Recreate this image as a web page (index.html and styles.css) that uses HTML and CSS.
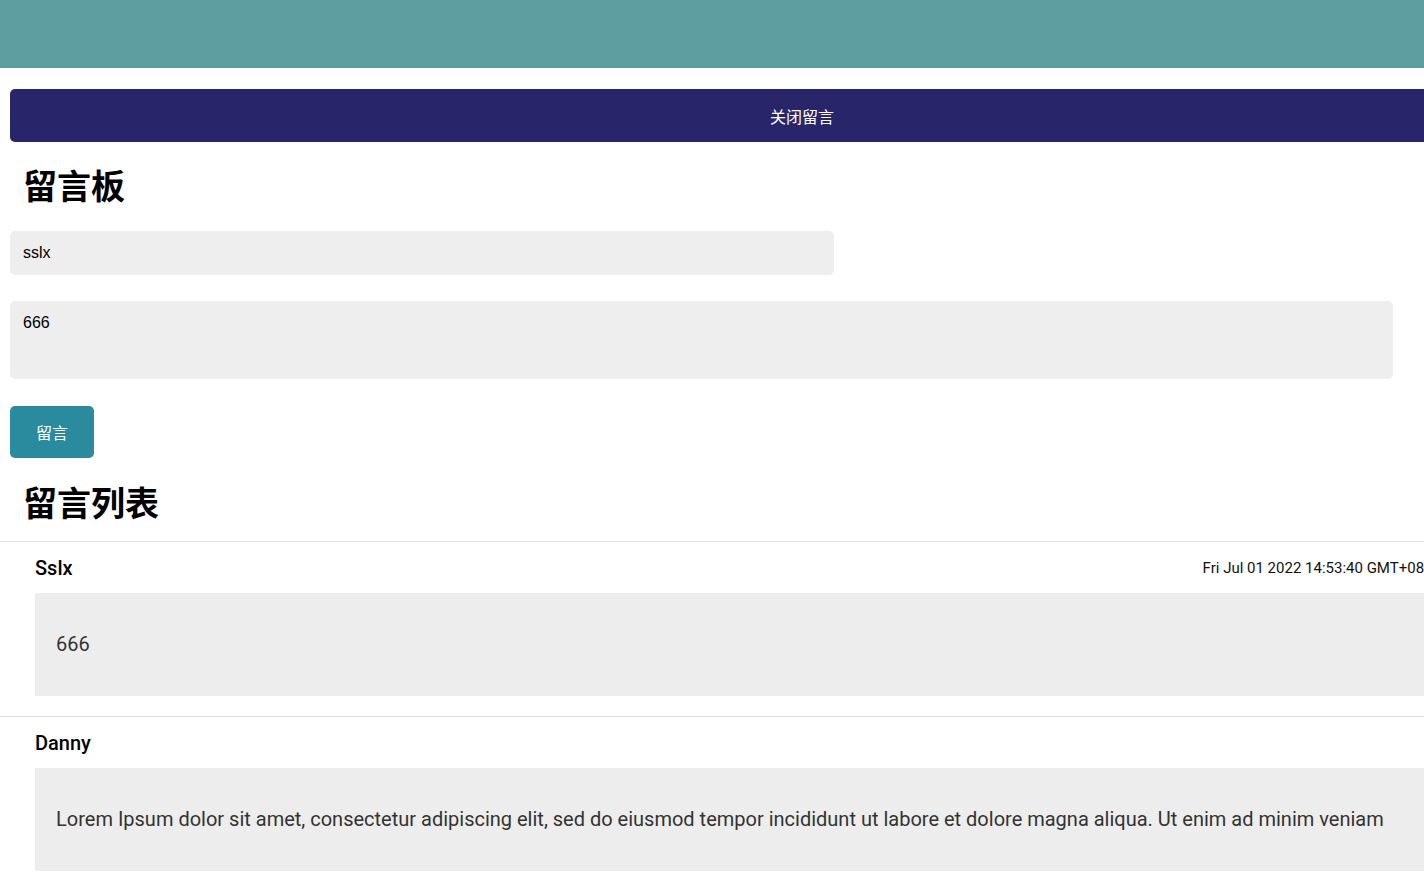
FILE: index.html
```html
<!DOCTYPE html>
<html lang="zh-CN">
<head>
<meta charset="utf-8">
<title>留言板</title>
<link rel="stylesheet" href="styles.css">
</head>
<body>
<div class="page">
  <header class="topbar"></header>
  <main class="main">
    <button class="btn-close">关闭留言</button>
    <h1 class="title">留言板</h1>
    <form class="form">
      <input class="field-name" type="text" value="sslx">
      <textarea class="field-msg">666</textarea>
      <button class="btn-submit" type="button">留言</button>
    </form>
    <h1 class="title title-list">留言列表</h1>
  </main>
  <ul class="list">
    <li class="item">
      <div class="item-head">
        <span class="item-name">Sslx</span>
        <span class="item-time">Fri Jul 01 2022 14:53:40 GMT+0800 (中国标准时间)</span>
      </div>
      <div class="item-body">666</div>
    </li>
    <li class="item">
      <div class="item-head">
        <span class="item-name">Danny</span>
        <span class="item-time"></span>
      </div>
      <div class="item-body">Lorem Ipsum dolor sit amet, consectetur adipiscing elit, sed do eiusmod tempor incididunt ut labore et dolore magna aliqua. Ut enim ad minim veniam</div>
    </li>
  </ul>
</div>
</body>
</html>
```

FILE: styles.css
```css
html {
  overflow: hidden;
}
body {
  margin: 0;
  background: #fff;
  font-family: Roboto, "Noto Sans CJK SC", sans-serif;
  color: #000;
}
.page {
  width: 1604px;
}
.topbar {
  height: 68px;
  background: #5f9ea0;
}
.main {
  padding: 21px 10px 0;
}
.btn-close {
  display: block;
  width: 100%;
  height: 53px;
  border: none;
  border-radius: 5px;
  background: #29256a;
  color: #fff;
  font-family: "Liberation Sans", "Noto Sans CJK SC", sans-serif;
  font-size: 16px;
  padding: 0;
}
.title {
  margin: 25px 0 -3px;
  padding-left: 13px;
  font-family: "Liberation Sans", "Noto Sans CJK SC", sans-serif;
  font-size: 34px;
  font-weight: 700;
  line-height: 40px;
}
.title-list {
  margin-top: 26px;
}
.form {
  display: flex;
  flex-direction: column;
  align-items: flex-start;
  margin-top: 27px;
}
.field-name,
.field-msg {
  box-sizing: border-box;
  border: none;
  border-radius: 5px;
  background: #eee;
  font-family: "Liberation Sans", sans-serif;
  font-size: 16px;
  color: #000;
  outline: none;
  margin: 0;
}
.field-name {
  width: 824px;
  height: 44px;
  padding: 0 13px;
}
.field-msg {
  width: 1383px;
  height: 78px;
  margin-top: 26px;
  padding: 13px 13px 11px;
  resize: none;
  line-height: 18px;
}
.btn-submit {
  margin-top: 27px;
  width: 84px;
  height: 52px;
  border: none;
  border-radius: 5px;
  background: #2a8a9e;
  color: #fff;
  font-family: "Liberation Sans", "Noto Sans CJK SC", sans-serif;
  font-size: 16px;
  padding: 0;
}
.list {
  list-style: none;
  margin: 20px 0 0;
  padding: 0;
}
.item {
  border-top: 1px solid #e0e0e0;
  padding: 14px 0 20px 35px;
}
.item-head {
  display: flex;
  justify-content: space-between;
  align-items: flex-start;
  margin: 0 59px 13px 0;
  min-height: 24px;
}
.item-name {
  font-size: 20px;
  font-weight: 500;
}
.item-time {
  font-size: 15px;
  color: #111;
  white-space: nowrap;
}
.item-body {
  background: #ededed;
  padding: 40px 21px;
  font-size: 20px;
  line-height: 23px;
  color: #333;
}
```
